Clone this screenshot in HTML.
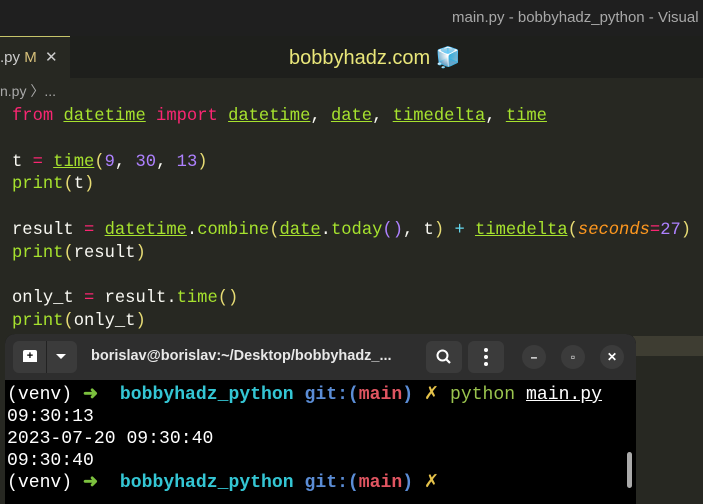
<!DOCTYPE html>
<html><head><meta charset="utf-8"><style>
*{margin:0;padding:0;box-sizing:border-box}
body{width:703px;height:500px;overflow:hidden;background:#272822;position:relative;font-family:"Liberation Sans",sans-serif}
.top{position:absolute;left:0;top:0;width:703px;height:36px;background:#1f1f1f}
.title{position:absolute;left:452px;top:9px;color:#a8a8a8;font-size:15px;white-space:nowrap}
.tabbar{position:absolute;left:0;top:36px;width:703px;height:42px;background:#1e1f1c}
.tab{position:absolute;left:0;top:0;width:70px;height:42px;background:#272822;border-top:1px solid #c6c46a;color:#ccc;font-size:15px;padding:11px 0 0 0}
.brand{position:absolute;left:289px;top:45px;color:#e9e67a;font-size:20px}
.crumb{position:absolute;left:0;top:81px;color:#aaa;font-size:14px}
.code{position:absolute;left:12px;top:106px;font-family:"Liberation Mono",monospace;font-size:17.15px;line-height:22.8px;color:#f8f8f2;white-space:pre}
.k{color:#f92672}.g{color:#a6e22e}.u{text-decoration:underline;text-decoration-color:#a6e22e}
.y{color:#e6db74}.p{color:#ae81ff}.o{color:#fd971f;font-style:italic}.c{color:#66d9ef}
.hl{position:absolute;left:633px;top:336px;width:70px;height:20px;background:#3e3d32}
.term{position:absolute;left:5px;top:334px;width:631px;height:170px;background:#000;border-radius:10px 10px 0 0;overflow:hidden}
.th{height:46px;background:#2e2e2e;position:relative}
.btn{position:absolute;background:#3b3b3b;border-radius:6px}
.circ{position:absolute;width:24px;height:24px;border-radius:12px;background:#3b3b3b;color:#fff;font-size:12px;text-align:center;line-height:24px;font-weight:bold}
.tt{position:absolute;left:86px;top:14px;color:#e8e8e8;font-size:14.5px;font-weight:bold}
.out{position:absolute;left:2px;top:50px;font-family:"Liberation Mono",monospace;font-size:18.1px;line-height:22px;color:#fff;white-space:pre}
.cy{color:#34c6d4;font-weight:bold}.bl{color:#5b8dd6;font-weight:bold}.rd{color:#e05561;font-weight:bold}.gr{color:#7cc13e;font-weight:bold}.ye{color:#e5c24a}.pg{color:#9ac44e}
</style></head><body>
<div class="top"><div class="title">main.py - bobbyhadz_python - Visual</div></div>
<div class="tabbar"><div class="tab">.py <span style="color:#d7c07a">M</span> &nbsp;✕</div></div>
<div class="brand">bobbyhadz.com 🧊</div>
<div class="crumb">n.py 〉...</div>
<div class="hl"></div>
<div class="code"><span class="k">from</span> <span class="g u">datetime</span> <span class="k">import</span> <span class="g u">datetime</span>, <span class="g u">date</span>, <span class="g u">timedelta</span>, <span class="g u">time</span>

t <span class="k">=</span> <span class="g u">time</span><span class="y">(</span><span class="p">9</span>, <span class="p">30</span>, <span class="p">13</span><span class="y">)</span>
<span class="g">print</span><span class="y">(</span>t<span class="y">)</span>

result <span class="k">=</span> <span class="g u">datetime</span>.<span class="g">combine</span><span class="y">(</span><span class="g u">date</span>.<span class="g">today</span><span class="p">()</span>, t<span class="y">)</span> <span class="c">+</span> <span class="g u">timedelta</span><span class="y">(</span><span class="o">seconds</span><span class="k">=</span><span class="p">27</span><span class="y">)</span>
<span class="g">print</span><span class="y">(</span>result<span class="y">)</span>

only_t <span class="k">=</span> result.<span class="g">time</span><span class="y">()</span>
<span class="g">print</span><span class="y">(</span>only_t<span class="y">)</span></div>
<div class="term">
<div class="th">
<div class="btn" style="left:8px;top:7px;width:64px;height:32px"></div>
<div style="position:absolute;left:41px;top:7px;width:1px;height:32px;background:#222"></div>
<div style="position:absolute;left:18px;top:16px;width:14px;height:12px;background:#fff;border-radius:2px 2px 0 0;color:#000;font-size:11px;line-height:12px;text-align:center;font-weight:bold">+</div>
<div style="position:absolute;left:51px;top:20px;width:0;height:0;border-left:5px solid transparent;border-right:5px solid transparent;border-top:5px solid #fff"></div>
<div class="tt">borislav@borislav:~/Desktop/bobbyhadz_...</div>
<div class="btn" style="left:421px;top:7px;width:36px;height:32px"><svg width="36" height="32"><circle cx="16.5" cy="14.5" r="5" fill="none" stroke="#fff" stroke-width="2"/><line x1="20" y1="18" x2="24" y2="22" stroke="#fff" stroke-width="2.2"/></svg></div>
<div class="btn" style="left:463px;top:7px;width:36px;height:32px"><svg width="36" height="32"><circle cx="18" cy="9" r="2" fill="#fff"/><circle cx="18" cy="16" r="2" fill="#fff"/><circle cx="18" cy="23" r="2" fill="#fff"/></svg></div>
<div class="circ" style="left:517px;top:11px">–</div>
<div class="circ" style="left:556px;top:11px">▫</div>
<div class="circ" style="left:595px;top:11px">✕</div>
</div>
<div class="out">(venv) <span class="gr">➜</span>  <span class="cy">bobbyhadz_python</span> <span class="bl">git:(</span><span class="rd">main</span><span class="bl">)</span> <span class="ye">✗</span> <span class="pg">python</span> <span style="text-decoration:underline">main.py</span>
09:30:13
2023-07-20 09:30:40
09:30:40
(venv) <span class="gr">➜</span>  <span class="cy">bobbyhadz_python</span> <span class="bl">git:(</span><span class="rd">main</span><span class="bl">)</span> <span class="ye">✗</span></div>
<div style="position:absolute;left:622px;top:118px;width:5px;height:36px;background:#aaa;border-radius:3px"></div>
</div>
</body></html>
